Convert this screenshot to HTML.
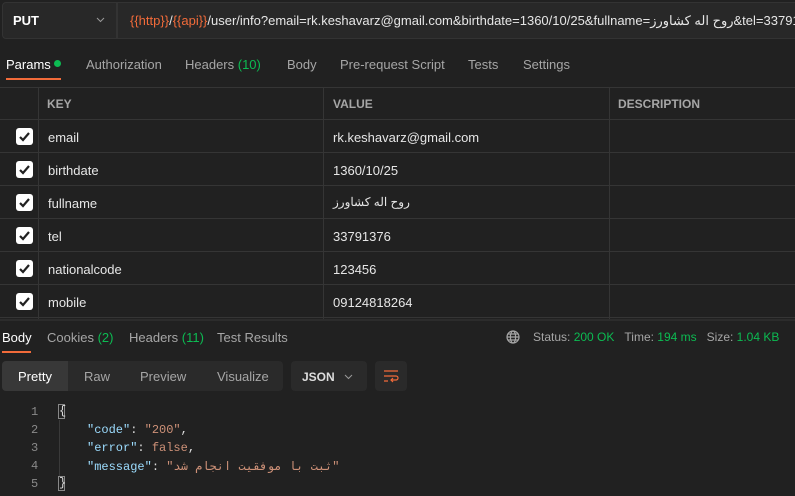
<!DOCTYPE html>
<html><head><style>
*{margin:0;padding:0;box-sizing:border-box}
body{width:795px;height:496px;background:#212121;font-family:"Liberation Sans","Noto Sans CJK SC",sans-serif;font-size:13px;color:#e6e6e6;position:relative;overflow:hidden}
.a{position:absolute;white-space:nowrap}
.g{color:#0cbb52}
.o{color:#f26b3a}
.mute{color:#a6a6a6}
.cb{position:absolute;left:16px;width:17px;height:17px;background:#fff;border-radius:3px}
.cb svg{position:absolute;left:2px;top:2px}
.row{position:absolute;left:0;width:795px;height:33px;border-bottom:1px solid #353535}
.vl{position:absolute;top:87px;height:232px;width:1px;background:#353535}
.code{font-family:"Liberation Mono","DejaVu Sans Mono",monospace;font-size:12px}
</style></head><body>
<div class="a" style="left:2px;top:2px;width:115px;height:37px;background:#282828;border:1px solid #333;border-radius:4px 0 0 4px"></div>
<div class="a" style="left:13px;top:13px;font-weight:bold;color:#fff">PUT</div>
<svg class="a" style="left:96px;top:17px" width="9" height="6" viewBox="0 0 9 6" fill="none" stroke="#999" stroke-width="1"><path d="M1 1l3.5 3.5L8 1"/></svg>
<div class="a" style="left:117px;top:2px;width:680px;height:37px;background:#282828;border:1px solid #333"></div>
<div class="a" style="left:130px;top:13px;color:#e6e6e6;font-size:13px"><span class="o">{{http}}</span>/<span class="o">{{api}}</span>/user/info?email=rk.keshavarz@gmail.com&amp;birthdate=1360/10/25&amp;fullname=روح اله کشاورز&amp;tel=33791376</div>
<div class="a" style="left:6px;top:57px;color:#fff">Params</div>
<div class="a" style="left:54px;top:60px;width:7px;height:7px;border-radius:50%;background:#0cbb52"></div>
<div class="a" style="left:6px;top:78px;width:55px;height:2px;background:#f26b3a"></div>
<div class="a mute" style="left:86px;top:57px">Authorization</div>
<div class="a mute" style="left:185px;top:57px">Headers <span class="g">(10)</span></div>
<div class="a mute" style="left:287px;top:57px">Body</div>
<div class="a mute" style="left:340px;top:57px">Pre-request Script</div>
<div class="a mute" style="left:468px;top:57px">Tests</div>
<div class="a mute" style="left:523px;top:57px">Settings</div>
<div class="row" style="top:87px;border-top:1px solid #353535;height:33px"></div>
<div class="a" style="left:47px;top:97px;font-weight:bold;color:#a6a6a6;font-size:12px">KEY</div>
<div class="a" style="left:333px;top:97px;font-weight:bold;color:#a6a6a6;font-size:12px">VALUE</div>
<div class="a" style="left:618px;top:97px;font-weight:bold;color:#a6a6a6;font-size:12px">DESCRIPTION</div>
<div class="row" style="top:120px"></div><div class="row" style="top:153px"></div><div class="row" style="top:186px"></div><div class="row" style="top:219px"></div><div class="row" style="top:252px"></div><div class="row" style="top:285px"></div>
<div class="vl" style="left:38px"></div><div class="vl" style="left:323px"></div><div class="vl" style="left:609px"></div>
<div class="cb" style="top:128px"><svg width="13" height="13"><path d="M2 7l3 3 6-7" stroke="#212121" stroke-width="2.2" fill="none"/></svg></div>
<div class="cb" style="top:161px"><svg width="13" height="13"><path d="M2 7l3 3 6-7" stroke="#212121" stroke-width="2.2" fill="none"/></svg></div>
<div class="cb" style="top:194px"><svg width="13" height="13"><path d="M2 7l3 3 6-7" stroke="#212121" stroke-width="2.2" fill="none"/></svg></div>
<div class="cb" style="top:227px"><svg width="13" height="13"><path d="M2 7l3 3 6-7" stroke="#212121" stroke-width="2.2" fill="none"/></svg></div>
<div class="cb" style="top:260px"><svg width="13" height="13"><path d="M2 7l3 3 6-7" stroke="#212121" stroke-width="2.2" fill="none"/></svg></div>
<div class="cb" style="top:293px"><svg width="13" height="13"><path d="M2 7l3 3 6-7" stroke="#212121" stroke-width="2.2" fill="none"/></svg></div>
<div class="a" style="left:48px;top:130px">email</div><div class="a" style="left:333px;top:130px">rk.keshavarz@gmail.com</div>
<div class="a" style="left:48px;top:163px">birthdate</div><div class="a" style="left:333px;top:163px">1360/10/25</div>
<div class="a" style="left:48px;top:196px">fullname</div><div class="a" style="left:333px;top:195px;font-size:12px">روح اله کشاورز</div>
<div class="a" style="left:48px;top:229px">tel</div><div class="a" style="left:333px;top:229px">33791376</div>
<div class="a" style="left:48px;top:262px">nationalcode</div><div class="a" style="left:333px;top:262px">123456</div>
<div class="a" style="left:48px;top:295px">mobile</div><div class="a" style="left:333px;top:295px">09124818264</div>
<div class="a" style="left:0;top:319px;width:795px;height:2px;background:#2c2c2c"></div>
<div class="a" style="left:2px;top:330px;color:#fff">Body</div>
<div class="a" style="left:2px;top:351px;width:29px;height:2px;background:#f26b3a"></div>
<div class="a mute" style="left:47px;top:330px">Cookies <span class="g">(2)</span></div>
<div class="a mute" style="left:129px;top:330px">Headers <span class="g">(11)</span></div>
<div class="a mute" style="left:217px;top:330px">Test Results</div>
<svg class="a" style="left:506px;top:330px" width="14" height="14" viewBox="0 0 14 14" fill="none" stroke="#a6a6a6" stroke-width="1.2"><circle cx="7" cy="7" r="6"/><ellipse cx="7" cy="7" rx="2.6" ry="6"/><path d="M1 7h12M2 4h10M2 10h10"/></svg>
<div class="a mute" style="left:533px;top:330px;font-size:12px">Status: <span class="g">200 OK</span>&nbsp;&nbsp;&nbsp;Time: <span class="g">194 ms</span>&nbsp;&nbsp;&nbsp;Size: <span class="g">1.04 KB</span></div>
<div class="a" style="left:2px;top:361px;width:281px;height:30px;background:#2a2a2a;border-radius:4px"></div>
<div class="a" style="left:2px;top:361px;width:66px;height:30px;background:#383838;border-radius:4px 0 0 4px"></div>
<div class="a" style="left:18px;top:369px;color:#fff">Pretty</div>
<div class="a mute" style="left:84px;top:369px">Raw</div>
<div class="a mute" style="left:140px;top:369px">Preview</div>
<div class="a mute" style="left:217px;top:369px">Visualize</div>
<div class="a" style="left:291px;top:361px;width:76px;height:30px;background:#2a2a2a;border-radius:4px"></div>
<div class="a" style="left:302px;top:370px;font-weight:bold;color:#ddd;font-size:12px">JSON</div>
<svg class="a" style="left:344px;top:374px" width="9" height="6" viewBox="0 0 9 6" fill="none" stroke="#999" stroke-width="1"><path d="M1 1l3.5 3.5L8 1"/></svg>
<div class="a" style="left:375px;top:361px;width:32px;height:30px;background:#2a2a2a;border-radius:4px"></div>
<svg class="a" style="left:383px;top:369px" width="16" height="14" viewBox="0 0 16 14" fill="none" stroke="#f26b3a" stroke-width="1.2"><path d="M1 2h14M1 7h12a2 2 0 0 1 0 4H8M10 9l-2 2 2 2M1 12h4"/></svg>
<div class="code">
<div class="a" style="left:31px;top:405px;color:#8a8a8a">1</div>
<div class="a" style="left:31px;top:423px;color:#8a8a8a">2</div>
<div class="a" style="left:31px;top:441px;color:#8a8a8a">3</div>
<div class="a" style="left:31px;top:459px;color:#8a8a8a">4</div>
<div class="a" style="left:31px;top:477px;color:#8a8a8a">5</div>
<div class="a" style="left:58px;top:404px;width:7px;height:15px;border:1px solid #888;color:#ddd;line-height:13px">{</div>
<div class="a" style="left:58px;top:476px;width:7px;height:15px;border:1px solid #888;color:#ddd;line-height:13px">}</div>
<div class="a" style="left:59px;top:420px;width:1px;height:56px;background:#3a3a3a"></div>
<div class="a" style="left:87px;top:423px"><span style="color:#9cdcfe">"code"</span><span style="color:#ddd">: </span><span style="color:#ce9178">"200"</span><span style="color:#ddd">,</span></div>
<div class="a" style="left:87px;top:441px"><span style="color:#9cdcfe">"error"</span><span style="color:#ddd">: </span><span style="color:#ce9178">false</span><span style="color:#ddd">,</span></div>
<div class="a" style="left:87px;top:459px"><span style="color:#9cdcfe">"message"</span><span style="color:#ddd">: </span><span style="color:#ce9178">"ثبت با موفقیت انجام شد"</span></div>
</div>
</body></html>
